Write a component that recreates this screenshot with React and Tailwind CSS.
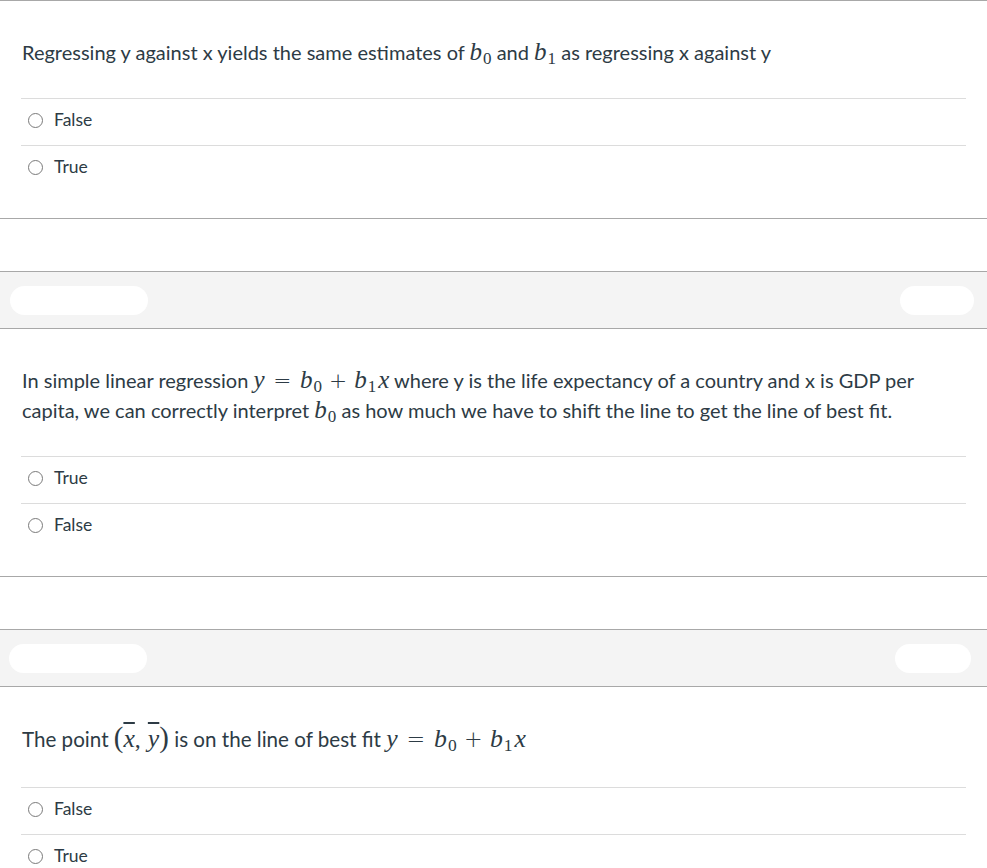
import React from 'react'

const serif = "font-['Liberation_Serif',serif]"
const opFont = "font-['DejaVu_Sans',sans-serif]"

function V({ children }) {
  // italic math variable, sized relative to the sentence
  return <span className={`${serif} italic text-[1.25em] leading-none`}>{children}</span>
}

function Sub({ children }) {
  return <span className={`${serif} not-italic text-[0.85em] leading-none relative top-[0.25em] ml-[1px]`}>{children}</span>
}

function Op({ children, rel }) {
  return (
    <span className={`${opFont} not-italic font-light text-[1.08em] leading-none ${rel ? 'mx-[0.4em]' : 'mx-[0.33em]'}`}>{children}</span>
  )
}

function B({ n }) {
  return (
    <span className="whitespace-nowrap">
      <V>b</V>
      <Sub>{n}</Sub>
    </span>
  )
}

function Line() {
  return (
    <span className="whitespace-nowrap">
      <V>y</V>
      <Op rel>=</Op>
      <B n="0" />
      <Op>+</Op>
      <B n="1" />
      <span className="ml-[2px]"><V>x</V></span>
    </span>
  )
}

function Radio() {
  return <span className="w-[15px] h-[15px] rounded-full border border-[#7a7a7a] bg-white shrink-0" />
}

function Answer({ label }) {
  return (
    <div className="border-t border-[#dcdcdc] flex items-center gap-[11px] pl-[7px] pt-[9px] pb-[13px] h-[47px]">
      <Radio />
      <span className="text-[17.5px] leading-[24px] text-[#2d3b45]">{label}</span>
    </div>
  )
}

function Question({ children, answers, big }) {
  return (
    <div className="border-t border-[#a8a8a8] pt-[36px] pb-[26px]">
      <div className={`px-[22px] leading-[30px] text-[#2d3b45] ${big ? 'text-[20.6px]' : 'text-[20px]'}`}>{children}</div>
      <div className={`mx-[21px] ${big ? 'mt-[33px]' : 'mt-[31px]'}`}>
        {answers.map(a => <Answer key={a} label={a} />)}
      </div>
    </div>
  )
}

function Band({ left, right }) {
  return (
    <>
      <div className="h-[53px] border-t border-[#a8a8a8]" />
      <div className="h-[57px] border-t border-[#a8a8a8] bg-[#f4f4f4] flex items-center justify-between" style={{ paddingLeft: left.x, paddingRight: right.x }}>
        <span className="h-[29px] bg-white rounded-full" style={{ width: left.w }} />
        <span className="h-[29px] bg-white rounded-full" style={{ width: right.w }} />
      </div>
    </>
  )
}

export default function App() {
  return (
    <div className="w-[987px] h-[868px] overflow-hidden bg-white font-['Lato','Open_Sans',sans-serif]">
      <Question answers={['False', 'True']}>
        Regressing y against x yields the same estimates of <B n="0" /> and <B n="1" /> as regressing x against y
      </Question>

      <Band left={{ x: 10, w: 138 }} right={{ x: 13, w: 74 }} />

      <Question answers={['True', 'False']}>
        In simple linear regression <Line /> where y is the life expectancy of a country and x is GDP per
        <br />
        capita, we can correctly interpret <B n="0" /> as how much we have to shift the line to get the line of best fit.
      </Question>

      <Band left={{ x: 9, w: 138 }} right={{ x: 16, w: 76 }} />

      <Question big answers={['False', 'True']}>
        The point{' '}
        <span className="whitespace-nowrap">
          <span className={`${serif} text-[1.4em] leading-none`}>(</span>
          <V><span className="overline">x</span></V>
          <span className={`${serif} text-[1.15em] leading-none mr-[0.3em]`}>,</span>
          <V><span className="overline">y</span></V>
          <span className={`${serif} text-[1.4em] leading-none`}>)</span>
        </span>{' '}
        is on the line of best fit <Line />
      </Question>
    </div>
  )
}
